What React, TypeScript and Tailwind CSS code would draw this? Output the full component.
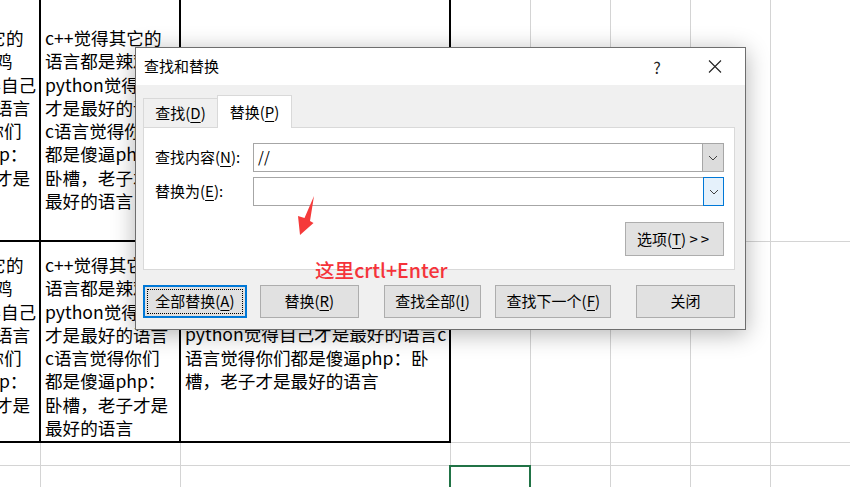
import React from 'react';

const cellText = [
    'c++觉得其它的',
    '语言都是辣鸡',
    'python觉得自己',
    '才是最好的语言',
    'c语言觉得你们',
    '都是傻逼php：',
    '卧槽，老子才是',
    '最好的语言',
];

const wideText = [
    'c++觉得其它的语言都是辣鸡',
    'python觉得自己才是最好的语言c',
    '语言觉得你们都是傻逼php：卧',
    '槽，老子才是最好的语言',
];

const sheetFont = { fontFamily: '"Noto Sans CJK SC", "Noto Sans", sans-serif' };
const uiFont = { fontFamily: '"Noto Sans CJK SC", "Noto Sans", sans-serif' };

const TextLines: React.FC<{ lines: string[] }> = ({ lines }) => (
    <div className="text-[17.6px] leading-[23.3px] text-black whitespace-nowrap" style={sheetFont}>
        {lines.map((l, i) => (
            <div key={i}>{l}</div>
        ))}
    </div>
);

const Chevron: React.FC = () => (
    <svg width="10" height="6" viewBox="0 0 10 6">
        <path d="M1 1 L5 5 L9 1" fill="none" stroke="#404040" strokeWidth="1" />
    </svg>
);

const Key: React.FC<{ k: string }> = ({ k }) => <span className="underline underline-offset-[3px]">{k}</span>;

const Btn: React.FC<{ className?: string; children: React.ReactNode }> = ({ className = '', children }) => (
    <div
        className={`h-[33px] flex items-center justify-center bg-[#e1e1e1] border border-[#adadad] text-[15px] text-black ${className}`}
    >
        {children}
    </div>
);

const Dialog: React.FC = () => (
    <div
        className="absolute left-[135px] top-[47px] w-[611px] h-[283px] border border-[#6e6e6e] bg-[#f0f0f0] flex flex-col shadow-[0_4px_22px_rgba(0,0,0,0.3)]"
        style={uiFont}
    >
        {/* title bar */}
        <div className="h-[37px] bg-white flex items-center">
            <div className="pl-[8px] text-[15px] text-black">查找和替换</div>
            <div className="flex-1" />
            <div className="w-[46px] flex justify-center text-[16px] text-[#222]">?</div>
            <div className="w-[46px] ml-[12px] mr-[7px] flex justify-center">
                <svg width="14" height="13" viewBox="0 0 14 13">
                    <path d="M1 0.5 L13 12.5 M13 0.5 L1 12.5" stroke="#222" strokeWidth="1.1" />
                </svg>
            </div>
        </div>

        {/* body */}
        <div className="flex-1 pl-[7px] pr-[10px]">
            <div className="h-[42px] flex items-end">
                <div className="h-[29px] w-[74px] border-t border-l border-[#d9d9d9] flex items-center justify-center text-[15px] text-black">
                    查找(<Key k="D" />)
                </div>
                <div className="relative z-10 -mb-px h-[33px] w-[75px] bg-white border border-b-0 border-[#d9d9d9] flex items-center justify-center text-[15px] text-black">
                    替换(<Key k="P" />)
                </div>
            </div>

            <div className="h-[143px] bg-white border border-[#d9d9d9] pl-[11px] pr-[10px] pt-[15px]">
                <div className="flex items-center">
                    <div className="w-[98px] text-[15px] text-black">
                        查找内容(<Key k="N" />):
                    </div>
                    <div className="flex-1 h-[29px] border border-[#a6a6a6] flex items-stretch">
                        <div className="flex-1 pl-[4px] flex items-center text-[15px] text-black">//</div>
                        <div className="w-[21px] bg-[#dcdcdc] border-l border-[#a6a6a6] flex items-center justify-center">
                            <Chevron />
                        </div>
                    </div>
                </div>
                <div className="flex items-center mt-[5px]">
                    <div className="w-[98px] text-[15px] text-black">
                        替换为(<Key k="E" />):
                    </div>
                    <div className="flex-1 h-[29px] border border-[#a6a6a6] flex items-stretch">
                        <div className="flex-1" />
                        <div className="w-[21px] -my-px -mr-px bg-[#e5f1fb] border border-[#0078d7] flex items-center justify-center">
                            <Chevron />
                        </div>
                    </div>
                </div>
                <div className="flex justify-end mt-[16px]">
                    <Btn className="w-[99px] h-[34px]">
                        选项(<Key k="T" />)&nbsp;<span className="tracking-[3px]">&gt;&gt;</span>
                    </Btn>
                </div>
            </div>

            <div className="flex mt-[15px]">
                <div className="w-[104px] h-[33px] border-2 border-[#0078d7] bg-[#e1e1e1] p-[2px]">
                    <div className="h-full border border-dotted border-black flex items-center justify-center text-[15px] text-black">
                        全部替换(<Key k="A" />)
                    </div>
                </div>
                <Btn className="w-[99px] ml-[13px]">
                    替换(<Key k="R" />)
                </Btn>
                <Btn className="w-[98px] ml-[25px]">
                    查找全部(<Key k="I" />)
                </Btn>
                <Btn className="w-[116px] ml-[14px]">
                    查找下一个(<Key k="F" />)
                </Btn>
                <Btn className="w-[99px] ml-[25px]">关闭</Btn>
            </div>
        </div>
    </div>
);

const App: React.FC = () => {
    const gray = 'border-[#d4d4d4]';
    return (
        <div className="relative w-[850px] h-[487px] overflow-hidden bg-white">
            {/* sheet */}
            <div className="ml-[-100px] grid grid-cols-[141px_140px_270px_80px_80px_80px_80px_80px] grid-rows-[242px_201px_23px_23px]">
                {/* row 1 */}
                <div className="border-r-2 border-b-2 border-black pl-[7px] pt-[26px] overflow-hidden">
                    <TextLines lines={cellText} />
                </div>
                <div className="border-r-2 border-b-2 border-black pl-[4px] pt-[26px] overflow-hidden">
                    <TextLines lines={cellText} />
                </div>
                <div className="border-r-2 border-b-2 border-black" />
                {[0, 1, 2, 3, 4].map((i) => (
                    <div key={'r1' + i} className={`border-r border-b ${gray}`} />
                ))}

                {/* row 2 */}
                <div className="border-r-2 border-b-2 border-black pl-[7px] pt-[11px] overflow-hidden">
                    <TextLines lines={cellText} />
                </div>
                <div className="border-r-2 border-b-2 border-black pl-[4px] pt-[11px] overflow-hidden">
                    <TextLines lines={cellText} />
                </div>
                <div className="border-r-2 border-b-2 border-black pl-[4px] pt-[57px] overflow-hidden">
                    <TextLines lines={wideText} />
                </div>
                {[0, 1, 2, 3, 4].map((i) => (
                    <div key={'r2' + i} className={`border-r border-b ${gray}`} />
                ))}

                {/* row 3 */}
                {[0, 1, 2, 3, 4, 5, 6, 7].map((i) => (
                    <div key={'r3' + i} className={`border-r border-b ${gray}`} />
                ))}

                {/* row 4 */}
                {[0, 1, 2, 3, 4, 5, 6, 7].map((i) => (
                    <div key={'r4' + i} className={`relative border-r border-b ${gray}`}>
                        {i === 3 && (
                            <div className="absolute -left-[2px] -top-[1px] w-[82px] h-[30px] border-2 border-[#217346]" />
                        )}
                    </div>
                ))}
            </div>

            <Dialog />

            {/* annotation */}
            <svg className="absolute left-[296px] top-[194px]" width="20" height="44" viewBox="0 0 20 44">
                <polygon points="18,2 14,27 17.5,29 4,41 2,22 8.5,24" fill="#f53a3a" />
            </svg>
            <div
                className="absolute left-[315px] top-[257px] text-[19.6px] leading-[26px] font-medium text-[#f5333a] whitespace-nowrap"
                style={uiFont}
            >
                这里crtl+Enter
            </div>
        </div>
    );
};

export default App;
